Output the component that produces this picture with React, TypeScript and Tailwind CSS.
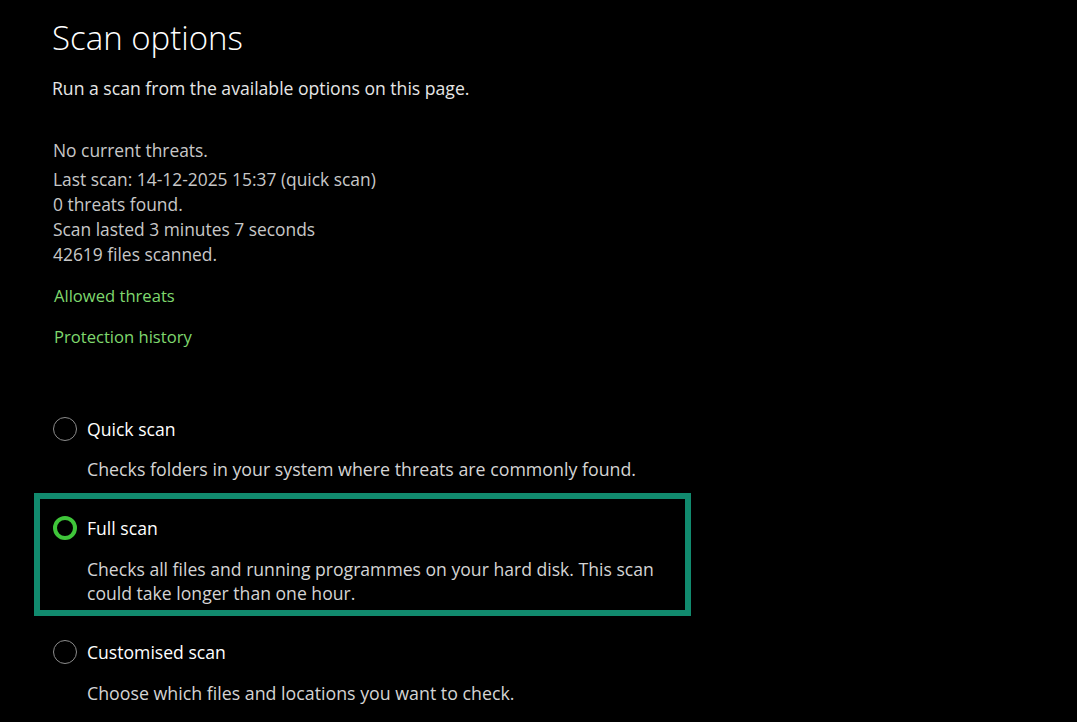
const font = { fontFamily: '"Open Sans", "Noto Sans", sans-serif' }

const statusLines = [
  'Last scan: 14-12-2025 15:37 (quick scan)',
  '0 threats found.',
  'Scan lasted 3 minutes 7 seconds',
  '42619 files scanned.',
]

function Radio({ checked }: { checked?: boolean }) {
  if (checked) {
    return <span className="block h-6 w-6 shrink-0 rounded-full border-4 border-[#3fc53a]" />
  }
  return <span className="block h-6 w-6 shrink-0 rounded-full border-[1.5px] border-[#8c8c8c]" />
}

export default function App() {
  return (
    <div className="min-h-screen w-full bg-black pl-[52px] pt-[18px] text-white" style={font}>
      <h1 className="text-[33px] font-light leading-[40px] text-white">Scan options</h1>
      <p className="mt-[18px] text-[17.6px] leading-[24px] text-[#e6e6e6]">
        Run a scan from the available options on this page.
      </p>

      <div className="mt-[38px] pl-[1px] text-[17.4px] leading-[25px] text-[#c8c8c8]">
        <p className="mb-[4px]">No current threats.</p>
        {statusLines.map((line) => (
          <p key={line}>{line}</p>
        ))}
      </div>

      <div className="flex flex-col items-start pl-[2px] text-[16.6px] leading-[24px] text-[#7fd86e]">
        <a className="mt-[17px]">Allowed threats</a>
        <a className="mt-[17px]">Protection history</a>
      </div>

      <div className="mt-[68px] pl-[1px]">
        <div className="flex items-center gap-[10px]">
          <Radio />
          <span className="text-[17.6px] leading-[24px] text-white">Quick scan</span>
        </div>
        <p className="mt-[16px] pl-[34px] text-[17.8px] leading-[24px] text-[#d4d4d4]">
          Checks folders in your system where threats are commonly found.
        </p>
      </div>

      <div className="-ml-[18px] mt-[12px] w-[657px] border-[6px] border-[#118a6e] pb-[5px] pl-[13px] pt-[17px]">
        <div className="flex items-center gap-[10px]">
          <Radio checked />
          <span className="text-[17.6px] leading-[24px] text-white">Full scan</span>
        </div>
        <p className="mt-[17px] pl-[34px] text-[17.6px] leading-[24px] text-[#d4d4d4]">
          Checks all files and running programmes on your hard disk. This scan could take longer than one hour.
        </p>
      </div>

      <div className="mt-[24px] pl-[1px]">
        <div className="flex items-center gap-[10px]">
          <Radio />
          <span className="text-[17.6px] leading-[24px] text-white">Customised scan</span>
        </div>
        <p className="mt-[17px] pl-[34px] text-[17.8px] leading-[24px] text-[#d4d4d4]">
          Choose which files and locations you want to check.
        </p>
      </div>
    </div>
  )
}
